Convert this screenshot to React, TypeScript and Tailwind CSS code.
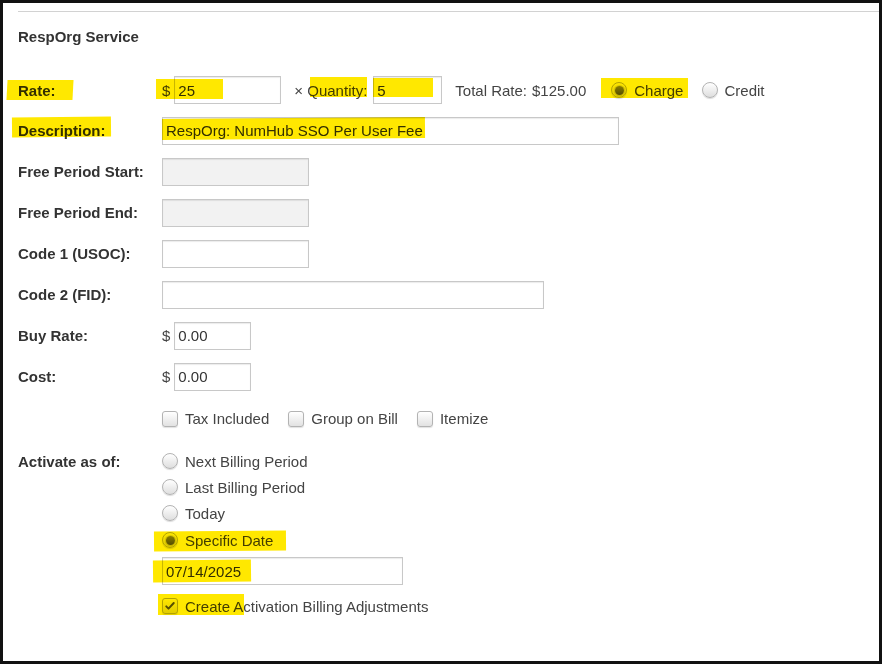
import React from 'react';

const marks = [
  'left-[7px] top-[80px] w-[66px] h-[20px] -skew-x-3',
  'left-[156px] top-[79px] w-[67px] h-[20px]',
  'left-[310px] top-[77px] w-[57px] h-[20px]',
  'left-[373px] top-[78px] w-[60px] h-[19px]',
  'left-[601px] top-[78px] w-[87px] h-[20px]',
  'left-[12px] top-[117px] w-[99px] h-[20px] -rotate-[0.6deg]',
  'left-[162px] top-[118px] w-[263px] h-[21px] -rotate-[0.4deg]',
  'left-[154px] top-[531px] w-[132px] h-[20px] -rotate-[0.5deg]',
  'left-[153px] top-[560px] w-[98px] h-[22px] -rotate-[0.7deg]',
  'left-[158px] top-[594px] w-[86px] h-[21px]',
];

function Radio({ checked = false }: { checked?: boolean }) {
  return (
    <span className="relative flex h-[16px] w-[16px] shrink-0 items-center justify-center rounded-full border border-[#b3b3b3] bg-gradient-to-b from-white to-[#dedede] shadow-[0_1px_1px_rgba(0,0,0,0.15)]">
      {checked && <span className="h-[9px] w-[9px] rounded-full bg-gradient-to-b from-[#8a8a8a] to-[#555] shadow-[0_0_1px_1px_rgba(0,0,0,0.15)]" />}
    </span>
  );
}

function Checkbox({ checked = false }: { checked?: boolean }) {
  return (
    <span className="flex h-[16px] w-[16px] shrink-0 items-center justify-center rounded-[3px] border border-[#b3b3b3] bg-gradient-to-b from-white to-[#e2e2e2] shadow-[0_1px_1px_rgba(0,0,0,0.12)]">
      {checked && (
        <svg viewBox="0 0 16 16" className="h-[12px] w-[12px]">
          <path d="M3 8.5l3 3 7-7.5" fill="none" stroke="#555" strokeWidth="2.6" strokeLinecap="round" strokeLinejoin="round" />
        </svg>
      )}
    </span>
  );
}

function TextBox({ value = '', width, disabled = false }: { value?: string; width: string; disabled?: boolean }) {
  return (
    <div
      className={`flex h-[28px] items-center border border-[#c8c8c8] pl-[3px] pt-[2px] text-[15px] text-[#333] shadow-[inset_0_1px_1px_rgba(0,0,0,0.08)] ${width} ${
        disabled ? 'bg-[#f2f2f2]' : 'bg-white'
      }`}
    >
      {value}
    </div>
  );
}

function Row({ label, children, tall = false }: { label?: string; children?: React.ReactNode; tall?: boolean }) {
  return (
    <div className={`flex items-center ${tall ? 'h-[40px]' : 'h-[41px]'}`}>
      <div className="w-[144px] shrink-0 pt-[2px] text-[15px] font-bold text-[#333]">{label}</div>
      <div className="flex items-center">{children}</div>
    </div>
  );
}

export default function App() {
  return (
    <div className="relative h-[665px] w-[882px] bg-white font-['Liberation_Sans',Arial,sans-serif] text-[15px] text-[#444]">
      <div className="h-[664px] w-[882px] border-[3px] border-[#111]">
        <div className="ml-[15px] mt-[8px] h-px bg-[#d2d2d2]" />
        <div className="pl-[15px]">
          <div className="flex h-[48px] items-center pt-[2px] text-[15px] font-bold text-[#333]">RespOrg Service</div>

          <div className="mt-[10px]">
            <Row label="Rate:" tall>
              <span className="mr-[4px] pt-[2px]">$</span>
              <TextBox value="25" width="w-[107px]" />
              <span className="ml-[13px] mr-[6px] pt-[2px]">× Quantity:</span>
              <TextBox value="5" width="w-[69px]" />
              <span className="ml-[13px] pt-[2px]">Total Rate:</span>
              <span className="ml-[5px] pt-[2px]">$125.00</span>
              <label className="ml-[25px] flex items-center gap-[7px]">
                <Radio checked />
                <span className="pt-[2px]">Charge</span>
              </label>
              <label className="ml-[19px] flex items-center gap-[6px]">
                <Radio />
                <span className="pt-[2px]">Credit</span>
              </label>
            </Row>
            <Row label="Description:">
              <TextBox value="RespOrg: NumHub SSO Per User Fee" width="w-[457px]" />
            </Row>
            <Row label="Free Period Start:">
              <TextBox width="w-[147px]" disabled />
            </Row>
            <Row label="Free Period End:">
              <TextBox width="w-[147px]" disabled />
            </Row>
            <Row label="Code 1 (USOC):">
              <TextBox width="w-[147px]" />
            </Row>
            <Row label="Code 2 (FID):">
              <TextBox width="w-[382px]" />
            </Row>
            <Row label="Buy Rate:">
              <span className="mr-[4px] pt-[2px]">$</span>
              <TextBox value="0.00" width="w-[77px]" />
            </Row>
            <Row label="Cost:">
              <span className="mr-[4px] pt-[2px]">$</span>
              <TextBox value="0.00" width="w-[77px]" />
            </Row>
            <div className="flex h-[41px] items-center pl-[144px] pt-[2px]">
              <div className="flex items-center gap-[19px]">
                <label className="flex items-center gap-[7px]">
                  <Checkbox />
                  <span className="pt-[2px]">Tax Included</span>
                </label>
                <label className="flex items-center gap-[7px]">
                  <Checkbox />
                  <span className="pt-[2px]">Group on Bill</span>
                </label>
                <label className="flex items-center gap-[7px]">
                  <Checkbox />
                  <span className="pt-[2px]">Itemize</span>
                </label>
              </div>
            </div>

            <div className="mt-[10px] flex">
              <div className="flex h-[26px] w-[144px] shrink-0 items-center pt-[2px] text-[15px] font-bold text-[#333]">Activate as of:</div>
              <div className="flex flex-col">
                {['Next Billing Period', 'Last Billing Period', 'Today'].map((opt) => (
                  <label key={opt} className="flex h-[26px] items-center gap-[7px]">
                    <Radio />
                    <span className="pt-[2px]">{opt}</span>
                  </label>
                ))}
                <label className="mt-[1px] flex h-[26px] items-center gap-[7px]">
                  <Radio checked />
                  <span className="pt-[2px]">Specific Date</span>
                </label>
                <div className="mt-[4px]">
                  <TextBox value="07/14/2025" width="w-[241px]" />
                </div>
                <label className="mt-[8px] flex h-[26px] items-center gap-[7px]">
                  <Checkbox checked />
                  <span className="pt-[2px]">Create Activation Billing Adjustments</span>
                </label>
              </div>
            </div>
          </div>
        </div>
      </div>

      {/* marker highlights drawn over the screenshot */}
      <div className="pointer-events-none absolute inset-0">
        {marks.map((m) => (
          <div key={m} className={`absolute bg-[#ffe800] mix-blend-multiply ${m}`} />
        ))}
      </div>
    </div>
  );
}
